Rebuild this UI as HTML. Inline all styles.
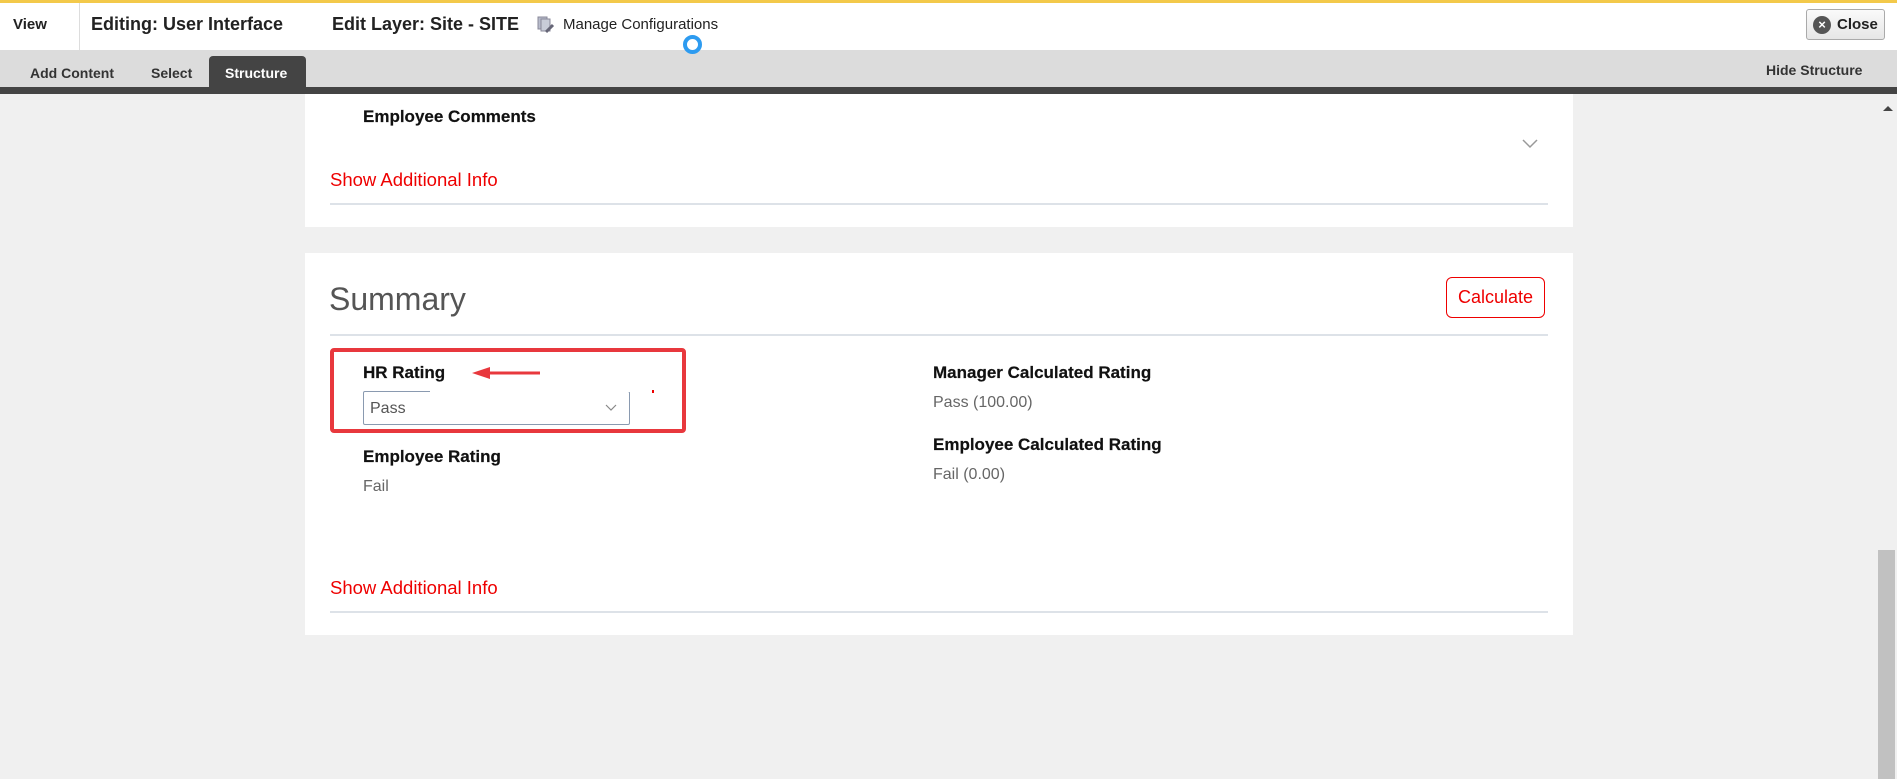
<!DOCTYPE html>
<html><head><meta charset="utf-8"><style>
*{margin:0;padding:0;box-sizing:border-box}
body{width:1897px;height:779px;overflow:hidden;background:#f0f0f0;font-family:"Liberation Sans",sans-serif;position:relative}
.a{position:absolute;white-space:nowrap}
.hd{font-weight:bold;font-size:18px;color:#222}
.lb{font-size:17px;color:#111;font-weight:600;-webkit-text-stroke:0.2px #111}
.val{font-size:16px;color:#666}
.red{color:#e00;font-size:18.5px}
.line{position:absolute;height:2px;background:#dde2e8}
</style></head><body>
<div class="a" style="left:0;top:0;width:1897px;height:50px;background:#fff;border-top:3px solid #f3c94a"></div>
<div class="a hd" style="left:13px;top:16px;font-size:15px">View</div>
<div class="a" style="left:79px;top:3px;width:1px;height:47px;background:#ddd"></div>
<div class="a hd" style="left:91px;top:14px">Editing: User Interface</div>
<div class="a hd" style="left:332px;top:14px">Edit Layer: Site - SITE</div>
<svg class="a" style="left:536px;top:15px" width="20" height="20" viewBox="0 0 20 20"><rect x="2" y="2" width="9" height="12" fill="#b8bccc" stroke="#889" /><rect x="5" y="4" width="9" height="12" fill="#c8ccd8" stroke="#889"/><path d="M10 17 L17 10" stroke="#667" stroke-width="3"/></svg>
<div class="a" style="left:563px;top:16px;font-size:15px;color:#222">Manage Configurations</div>
<div class="a" style="left:1806px;top:9px;width:79px;height:31px;border:1px solid #aaa;border-radius:3px;background:linear-gradient(#fafafa,#e6e6e6)"></div>
<div class="a" style="left:1813px;top:16px;width:18px;height:18px;border-radius:50%;background:#555;color:#fff;font-size:13px;font-weight:bold;text-align:center;line-height:18px">×</div>
<div class="a hd" style="left:1837px;top:16px;font-size:15px">Close</div>
<div class="a" style="left:0;top:50px;width:1897px;height:37px;background:#dcdcdc"></div>
<div class="a" style="left:683px;top:35px;width:19px;height:19px;border-radius:50%;border:4px solid #2d9bf0;background:#fff"></div>
<div class="a hd" style="left:30px;top:65px;font-size:14px;color:#333">Add Content</div>
<div class="a hd" style="left:151px;top:65px;font-size:14px;color:#333">Select</div>
<div class="a" style="left:209px;top:56px;width:97px;height:31px;background:#444;border-radius:4px 4px 0 0"></div>
<div class="a hd" style="left:225px;top:65px;font-size:14px;color:#fff">Structure</div>
<div class="a hd" style="left:1766px;top:62px;font-size:14px;color:#333">Hide Structure</div>
<div class="a" style="left:0;top:87px;width:1897px;height:7px;background:#444"></div>
<div class="a" style="left:1878px;top:550px;width:17px;height:229px;background:#c1c1c1"></div>
<div class="a" style="left:1883px;top:106px;width:0;height:0;border-left:5px solid transparent;border-right:5px solid transparent;border-bottom:5px solid #444"></div>

<div class="a" style="left:305px;top:94px;width:1268px;height:133px;background:#fff"></div>
<div class="a lb" style="left:363px;top:107px">Employee Comments</div>
<svg class="a" style="left:1522px;top:139px" width="16" height="10"><path d="M1 1 L8 8 L15 1" fill="none" stroke="#999" stroke-width="1.5"/></svg>
<div class="a red" style="left:330px;top:169px">Show Additional Info</div>
<div class="line" style="left:330px;top:203px;width:1218px"></div>

<div class="a" style="left:305px;top:253px;width:1268px;height:382px;background:#fff"></div>
<div class="a" style="left:329px;top:281px;font-size:32px;color:#555;font-weight:300">Summary</div>
<div class="a" style="left:1446px;top:277px;width:99px;height:41px;border:1px solid #e00;border-radius:6px;color:#e00;font-size:18px;text-align:center;line-height:39px">Calculate</div>
<div class="line" style="left:330px;top:334px;width:1218px"></div>
<div class="a" style="left:330px;top:348px;width:356px;height:85px;border:4px solid #e8383d;border-radius:4px"></div>
<div class="a lb" style="left:363px;top:363px">HR Rating</div>
<svg class="a" style="left:470px;top:364px" width="72" height="18"><path d="M70 9 H16" stroke="#e8383d" stroke-width="3"/><path d="M2 9 L20 3 L20 15 Z" fill="#e8383d"/></svg>
<div class="a" style="left:363px;top:391px;width:267px;height:34px;border:1px solid #8a9ab0;border-radius:2px;background:#fff"></div>
<div class="a" style="left:430px;top:389px;width:200px;height:3px;background:#fff"></div>
<div class="a val" style="left:370px;top:400px;color:#555">Pass</div>
<svg class="a" style="left:605px;top:404px" width="12" height="8"><path d="M1 1 L6 6 L11 1" fill="none" stroke="#888" stroke-width="1.2"/></svg>
<div class="a" style="left:652px;top:390px;width:2px;height:3px;background:#e00"></div>
<div class="a lb" style="left:363px;top:447px">Employee Rating</div>
<div class="a val" style="left:363px;top:478px">Fail</div>
<div class="a lb" style="left:933px;top:363px">Manager Calculated Rating</div>
<div class="a val" style="left:933px;top:394px">Pass (100.00)</div>
<div class="a lb" style="left:933px;top:435px">Employee Calculated Rating</div>
<div class="a val" style="left:933px;top:466px">Fail (0.00)</div>
<div class="a red" style="left:330px;top:577px">Show Additional Info</div>
<div class="line" style="left:330px;top:611px;width:1218px"></div>
</body></html>
